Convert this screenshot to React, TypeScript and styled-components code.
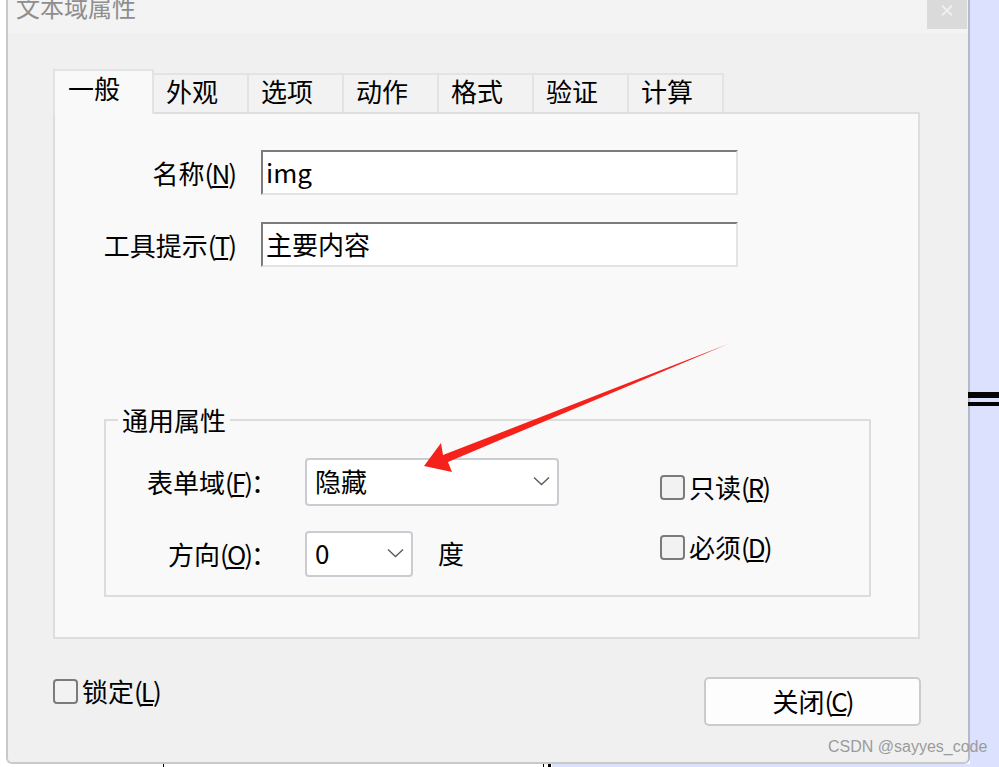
import React from 'react';
import styled, { createGlobalStyle } from 'styled-components';

const FONT = `"Noto Sans CJK SC", "Noto Sans", "Liberation Sans", sans-serif`;

const GlobalStyle = createGlobalStyle`
  html, body { margin: 0; padding: 0; background: #ffffff; }
  body { font-family: ${FONT}; color: #000; }
  * { box-sizing: border-box; }
`;

const Page = styled.div`
  position: relative;
  width: 999px;
  height: 767px;
  overflow: hidden;
  background: #ffffff;
  display: flex;
  flex-direction: column;
  font-family: ${FONT};
`;

const MainRow = styled.div`
  display: flex;
  height: 764px;
  flex: none;
`;

const Gutter = styled.div`
  width: 6px;
  flex: none;
  background: #ffffff;
`;

const Dialog = styled.div`
  width: 964px;
  height: 764px;
  flex: none;
  display: flex;
  flex-direction: column;
  background: #f0f0f0;
  border-left: 2px solid #c9c9c9;
  border-right: 2px solid #b5b9c8;
  border-bottom: 2px solid #c9c9c9;
  border-radius: 0 0 6px 6px;
`;

const Backdrop = styled.div`
  flex: 1;
  background: #dce2fd;
  padding-top: 392px;
`;

const EqBar = styled.div<{ $h: number; $gap: number }>`
  height: ${(p) => p.$h}px;
  margin-top: ${(p) => p.$gap}px;
  margin-left: -2px;
  background: #050505;
`;

const BottomStrip = styled.div`
  flex: 1;
  display: flex;
`;

const StripWhite = styled.div`
  width: 552px;
  flex: none;
  display: flex;
  background: #ffffff;
`;

const StripBlue = styled.div`
  flex: 1;
  background: #dce2fd;
`;

const Tick = styled.div<{ $x: number; $w: number }>`
  width: ${(p) => p.$w}px;
  margin-left: ${(p) => p.$x}px;
  background: #000;
`;

/* title bar */
const TitleBar = styled.div`
  height: 33px;
  flex: none;
  display: flex;
  justify-content: space-between;
  align-items: flex-start;
  background: #f3f3f3;
  padding-left: 8px;
`;

const TitleText = styled.div`
  font-size: 24px;
  line-height: 24px;
  margin-top: -5px;
  color: #8e8e8e;
`;

const CloseBox = styled.div`
  width: 40px;
  height: 29px;
  margin-right: 1px;
  background: #dadada;
  display: flex;
  justify-content: center;
  padding-top: 5px;
`;

/* body */
const Body = styled.div`
  flex: 1;
  display: flex;
  flex-direction: column;
  padding: 36px 48px 0 45px;
`;

const TabStrip = styled.div`
  display: flex;
  align-items: flex-end;
  height: 43px;
  position: relative;
  z-index: 1;
`;

const Tab = styled.div<{ $active?: boolean }>`
  height: ${(p) => (p.$active ? 45 : 39)}px;
  margin-bottom: ${(p) => (p.$active ? -2 : 0)}px;
  padding: ${(p) => (p.$active ? '0 32px 9px 13px' : '0 29px 5px 12px')};
  background: ${(p) => (p.$active ? '#f9f9f9' : '#f2f2f2')};
  border-top: 2px solid #e3e3e3;
  border-right: 2px solid #e3e3e3;
  border-left: ${(p) => (p.$active ? '2px solid #e3e3e3' : 'none')};
  display: flex;
  align-items: center;
  font-size: 26px;
  line-height: 26px;
  white-space: nowrap;
`;

const Panel = styled.div`
  height: 527px;
  flex: none;
  background: #f9f9f9;
  border: 2px solid #dedede;
  display: flex;
  flex-direction: column;
  padding: 36px 0 40px 0;
`;

const FieldGrid = styled.div`
  display: grid;
  grid-template-columns: 180px 477px;
  grid-auto-rows: 45px;
  column-gap: 26px;
  row-gap: 27px;
`;

const FieldLabel = styled.label`
  display: flex;
  align-items: center;
  justify-content: flex-end;
  font-size: 26px;
  line-height: 30px;
  white-space: nowrap;
`;

const Key = styled.span`
  letter-spacing: -2px;
`;

const TextInput = styled.div`
  display: flex;
  align-items: center;
  background: #ffffff;
  border-top: 2px solid #7c7c7c;
  border-left: 2px solid #7c7c7c;
  border-bottom: 2px solid #e4e4e4;
  border-right: 2px solid #e4e4e4;
  padding: 0 0 2px 3px;
  font-size: 26px;
  line-height: 30px;
`;

const Group = styled.fieldset`
  margin: auto 0 0 49px;
  width: 767px;
  min-width: 0;
  border: 2px solid #dcdcdc;
  padding: 0 0 18px 0;
`;

const Legend = styled.legend`
  margin-left: 12px;
  padding: 0 4px;
  font-size: 26px;
  line-height: 32px;
`;

const GroupGrid = styled.div`
  margin-top: 22px;
  display: grid;
  grid-template-columns: 171px 327px auto;
  grid-template-rows: 48px 46px;
  column-gap: 28px;
  row-gap: 25px;
`;

const GroupLabel = styled.label`
  display: flex;
  align-items: center;
  justify-content: flex-end;
  font-size: 26px;
  line-height: 30px;
  white-space: nowrap;
`;

const ComboCell = styled.div`
  display: flex;
  align-items: center;
  gap: 25px;
`;

const Combo = styled.div<{ $w: number }>`
  width: ${(p) => p.$w}px;
  height: 100%;
  display: flex;
  align-items: center;
  justify-content: space-between;
  background: #ffffff;
  border: 2px solid #c9ccd1;
  border-radius: 4px;
  padding: 0 7px 2px 8px;
  font-size: 26px;
  line-height: 30px;
`;

const Unit = styled.span`
  font-size: 26px;
  line-height: 30px;
  padding-bottom: 2px;
`;

const CheckRow = styled.label<{ $top?: number }>`
  align-self: start;
  margin-top: ${(p) => p.$top ?? 0}px;
  display: flex;
  align-items: center;
  gap: 4px;
  font-size: 26px;
  line-height: 26px;
  white-space: nowrap;
`;

const CheckText = styled.span`
  display: block;
`;

const CheckBox = styled.span`
  width: 25px;
  height: 25px;
  flex: none;
  border: 2px solid #7b7b7b;
  border-radius: 4px;
  background: #f2f2f2;
`;

const BottomRow = styled.div`
  margin-top: 38px;
  display: flex;
  justify-content: space-between;
  align-items: flex-start;
`;

const CloseButton = styled.button`
  width: 217px;
  height: 49px;
  margin-right: -1px;
  background: #fdfdfd;
  border: 2px solid #cbcbcb;
  border-radius: 5px;
  font-family: ${FONT};
  font-size: 26px;
  line-height: 30px;
  color: #000;
  padding: 0 0 2px 0;
`;

const Overlay = styled.svg`
  position: absolute;
  left: 0;
  top: 0;
  pointer-events: none;
`;

const Watermark = styled.div`
  position: absolute;
  left: 828px;
  top: 737px;
  font-family: "Liberation Sans", Arial, sans-serif;
  font-size: 16px;
  line-height: 20px;
  color: #9b9b9b;
  white-space: nowrap;
`;

const Chevron: React.FC = () => (
  <svg width="17" height="10" viewBox="0 0 17 10">
    <polyline points="1,1.5 8.5,8.5 16,1.5" fill="none" stroke="#5c5c5c" strokeWidth="1.4" />
  </svg>
);

const AccessKey: React.FC<{ k: string }> = ({ k }) => (
  <Key>
    (<u>{k}</u>)
  </Key>
);

const Check: React.FC<{ label: string; k: string; top?: number }> = ({ label, k, top }) => (
  <CheckRow $top={top}>
    <CheckBox />
    <CheckText>
      {label}
      <AccessKey k={k} />
    </CheckText>
  </CheckRow>
);

const tabs = ['一般', '外观', '选项', '动作', '格式', '验证', '计算'];

export default function App() {
  return (
    <>
      <GlobalStyle />
      <Page>
        <MainRow>
          <Gutter />
          <Dialog>
            <TitleBar>
              <TitleText>文本域属性</TitleText>
              <CloseBox>
                <svg width="12" height="11" viewBox="0 0 12 11">
                  <path d="M1 0.5 L11 10.5 M11 0.5 L1 10.5" stroke="#efefef" strokeWidth="2" />
                </svg>
              </CloseBox>
            </TitleBar>
            <Body>
              <TabStrip>
                {tabs.map((t, i) => (
                  <Tab key={t} $active={i === 0}>
                    {t}
                  </Tab>
                ))}
              </TabStrip>
              <Panel>
                <FieldGrid>
                  <FieldLabel>
                    名称<AccessKey k="N" />
                  </FieldLabel>
                  <TextInput>img</TextInput>
                  <FieldLabel>
                    工具提示<AccessKey k="T" />
                  </FieldLabel>
                  <TextInput>主要内容</TextInput>
                </FieldGrid>
                <Group>
                  <Legend>通用属性</Legend>
                  <GroupGrid>
                    <GroupLabel>
                      表单域<AccessKey k="F" />：
                    </GroupLabel>
                    <ComboCell>
                      <Combo $w={254}>
                        <span>隐藏</span>
                        <Chevron />
                      </Combo>
                    </ComboCell>
                    <Check label="只读" k="R" top={16} />
                    <GroupLabel>
                      方向<AccessKey k="O" />：
                    </GroupLabel>
                    <ComboCell>
                      <Combo $w={108}>
                        <span>0</span>
                        <Chevron />
                      </Combo>
                      <Unit>度</Unit>
                    </ComboCell>
                    <Check label="必须" k="D" top={3} />
                  </GroupGrid>
                </Group>
              </Panel>
              <BottomRow>
                <Check label="锁定" k="L" top={1} />
                <CloseButton>
                  关闭<AccessKey k="C" />
                </CloseButton>
              </BottomRow>
            </Body>
          </Dialog>
          <Backdrop>
            <EqBar $h={6} $gap={0} />
            <EqBar $h={4} $gap={4} />
          </Backdrop>
        </MainRow>
        <BottomStrip>
          <StripWhite>
            <Tick $x={163} $w={1} />
            <Tick $x={379} $w={1} />
            <Tick $x={4} $w={3} />
          </StripWhite>
          <StripBlue />
        </BottomStrip>
        <Overlay width="999" height="767" viewBox="0 0 999 767">
          <polygon
            points="424,466 441,443 443,455 728,344 448,462 452,472"
            fill="#f5221b"
          />
        </Overlay>
        <Watermark>CSDN @sayyes_code</Watermark>
      </Page>
    </>
  );
}
